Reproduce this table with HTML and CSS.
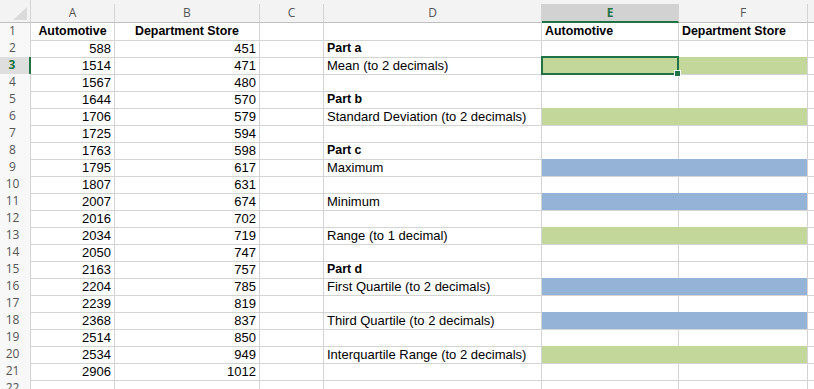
FILE: index.html
```html
<!DOCTYPE html>
<html>
<head>
<meta charset="utf-8">
<link rel="stylesheet" href="styles.css">
</head>
<body>
<div class="sheet">
  <div class="row hdr">
    <div class="corner"><span class="tri"></span></div>
    <div class="ch">A</div><div class="ch">B</div><div class="ch">C</div><div class="ch">D</div><div class="ch sel">E</div><div class="ch">F</div><div class="ch last"></div>
  </div>
  <div class="row"><div class="rh">1</div><div class="c b ctr">Automotive</div><div class="c b ctr">Department Store</div><div class="c"></div><div class="c"></div><div class="c b">Automotive</div><div class="c b">Department Store</div><div class="c last"></div></div>
  <div class="row"><div class="rh">2</div><div class="c num">588</div><div class="c num">451</div><div class="c"></div><div class="c b">Part a</div><div class="c"></div><div class="c"></div><div class="c last"></div></div>
  <div class="row"><div class="rh rsel">3</div><div class="c num">1514</div><div class="c num">471</div><div class="c"></div><div class="c">Mean (to 2 decimals)</div><div class="c g gl active"><span class="selbox"><span class="handle"></span></span></div><div class="c g"></div><div class="c last"></div></div>
  <div class="row"><div class="rh">4</div><div class="c num">1567</div><div class="c num">480</div><div class="c"></div><div class="c"></div><div class="c"></div><div class="c"></div><div class="c last"></div></div>
  <div class="row"><div class="rh">5</div><div class="c num">1644</div><div class="c num">570</div><div class="c"></div><div class="c b">Part b</div><div class="c"></div><div class="c"></div><div class="c last"></div></div>
  <div class="row"><div class="rh">6</div><div class="c num">1706</div><div class="c num">579</div><div class="c"></div><div class="c">Standard Deviation (to 2 decimals)</div><div class="c g gl"></div><div class="c g"></div><div class="c last"></div></div>
  <div class="row"><div class="rh">7</div><div class="c num">1725</div><div class="c num">594</div><div class="c"></div><div class="c"></div><div class="c"></div><div class="c"></div><div class="c last"></div></div>
  <div class="row"><div class="rh">8</div><div class="c num">1763</div><div class="c num">598</div><div class="c"></div><div class="c b">Part c</div><div class="c"></div><div class="c"></div><div class="c last"></div></div>
  <div class="row"><div class="rh">9</div><div class="c num">1795</div><div class="c num">617</div><div class="c"></div><div class="c">Maximum</div><div class="c bl bll"></div><div class="c bl"></div><div class="c last"></div></div>
  <div class="row"><div class="rh">10</div><div class="c num">1807</div><div class="c num">631</div><div class="c"></div><div class="c"></div><div class="c"></div><div class="c"></div><div class="c last"></div></div>
  <div class="row"><div class="rh">11</div><div class="c num">2007</div><div class="c num">674</div><div class="c"></div><div class="c">Minimum</div><div class="c bl bll"></div><div class="c bl"></div><div class="c last"></div></div>
  <div class="row"><div class="rh">12</div><div class="c num">2016</div><div class="c num">702</div><div class="c"></div><div class="c"></div><div class="c"></div><div class="c"></div><div class="c last"></div></div>
  <div class="row"><div class="rh">13</div><div class="c num">2034</div><div class="c num">719</div><div class="c"></div><div class="c">Range (to 1 decimal)</div><div class="c g gl"></div><div class="c g"></div><div class="c last"></div></div>
  <div class="row"><div class="rh">14</div><div class="c num">2050</div><div class="c num">747</div><div class="c"></div><div class="c"></div><div class="c"></div><div class="c"></div><div class="c last"></div></div>
  <div class="row"><div class="rh">15</div><div class="c num">2163</div><div class="c num">757</div><div class="c"></div><div class="c b">Part d</div><div class="c"></div><div class="c"></div><div class="c last"></div></div>
  <div class="row"><div class="rh">16</div><div class="c num">2204</div><div class="c num">785</div><div class="c"></div><div class="c">First Quartile (to 2 decimals)</div><div class="c bl bll"></div><div class="c bl"></div><div class="c last"></div></div>
  <div class="row"><div class="rh">17</div><div class="c num">2239</div><div class="c num">819</div><div class="c"></div><div class="c"></div><div class="c"></div><div class="c"></div><div class="c last"></div></div>
  <div class="row"><div class="rh">18</div><div class="c num">2368</div><div class="c num">837</div><div class="c"></div><div class="c">Third Quartile (to 2 decimals)</div><div class="c bl bll"></div><div class="c bl"></div><div class="c last"></div></div>
  <div class="row"><div class="rh">19</div><div class="c num">2514</div><div class="c num">850</div><div class="c"></div><div class="c"></div><div class="c"></div><div class="c"></div><div class="c last"></div></div>
  <div class="row"><div class="rh">20</div><div class="c num">2534</div><div class="c num">949</div><div class="c"></div><div class="c">Interquartile Range (to 2 decimals)</div><div class="c g gl"></div><div class="c g"></div><div class="c last"></div></div>
  <div class="row"><div class="rh">21</div><div class="c num">2906</div><div class="c num">1012</div><div class="c"></div><div class="c"></div><div class="c"></div><div class="c"></div><div class="c last"></div></div>
  <div class="row"><div class="rh">22</div><div class="c"></div><div class="c"></div><div class="c"></div><div class="c"></div><div class="c"></div><div class="c"></div><div class="c last"></div></div>
</div>
</body>
</html>
```
FILE: styles.css
```css
html, body {
  margin: 0;
  padding: 0;
  background: #ffffff;
  overflow: hidden;
}
.sheet {
  width: 814px;
  height: 389px;
  overflow: hidden;
  font-family: "Liberation Sans", Arial, sans-serif;
  font-size: 13px;
  color: #000;
}
.row {
  display: grid;
  grid-template-columns: 31px 84px 145px 64px 218px 137px 129px 6px;
  height: 17px;
}
.row.hdr {
  height: 23px;
  background: #f3f3f3;
  padding-top: 4px;
  box-sizing: border-box;
}
.corner {
  position: relative;
  border-right: 1px solid #d4d4d4;
  border-bottom: 1px solid #bfbfbf;
  margin-top: -4px;
  background: #f3f3f3;
}
.tri {
  position: absolute;
  left: 13px;
  top: 7px;
  width: 0;
  height: 0;
  border-left: 14px solid transparent;
  border-bottom: 13px solid #dadada;
}
.ch {
  box-sizing: border-box;
  border-right: 1px solid #d4d4d4;
  border-bottom: 1px solid #bfbfbf;
  text-align: center;
  font-family: "Open Sans", "Noto Sans", sans-serif;
  font-size: 12px;
  line-height: 17px;
  color: #555;
}
.ch.sel {
  background: #d2d2d2;
  color: #217346;
  font-weight: bold;
  border-bottom: 2px solid #217346;
}
.ch.last {
  border-right: none;
}
.rh {
  box-sizing: border-box;
  border-right: 1px solid #d4d4d4;
  border-bottom: 1px solid #d4d4d4;
  background: #f8f8f8;
  text-align: center;
  padding-right: 5px;
  font-family: "Open Sans", "Noto Sans", sans-serif;
  font-size: 12px;
  line-height: 16px;
  color: #555;
}
.rh.rsel {
  background: #dedede;
  color: #217346;
  font-weight: bold;
  border-right: 2px solid #217346;
}
.c {
  box-sizing: border-box;
  border-right: 1px solid #d4d4d4;
  border-bottom: 1px solid #d4d4d4;
  line-height: 17px;
  padding: 0 3px;
  white-space: nowrap;
  overflow: visible;
}
.c.last {
  border-right: none;
}
.num {
  text-align: right;
}
.b {
  font-weight: bold;
  font-size: 12.4px;
}
.ctr {
  text-align: center;
}
.g {
  background: #c4d79b;
}
.gl {
  border-right-color: #c4d79b;
}
.bl {
  background: #95b3d7;
}
.bll {
  border-right-color: #95b3d7;
}
.active {
  position: relative;
}
.selbox {
  position: absolute;
  left: -1px;
  top: -1px;
  right: -1px;
  bottom: -1px;
  border: 2px solid #217346;
}
.handle {
  position: absolute;
  right: -4px;
  bottom: -4px;
  width: 5px;
  height: 5px;
  background: #217346;
  border: 1px solid #fff;
}
```
